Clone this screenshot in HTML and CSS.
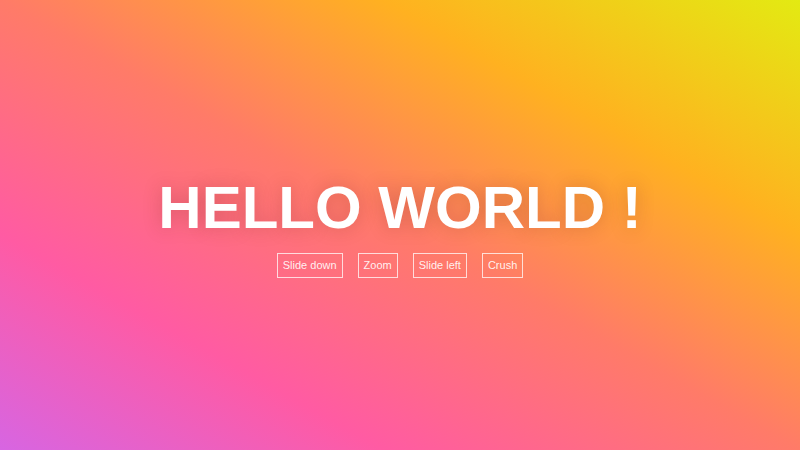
FILE: index.html
```html
<!DOCTYPE html>
<html>
<head>
<meta charset="utf-8">
<link rel="stylesheet" href="styles.css">
</head>
<body>
<main class="stage">
  <h1 class="title">HELLO WORLD !</h1>
  <div class="actions">
    <button class="btn">Slide down</button>
    <button class="btn">Zoom</button>
    <button class="btn">Slide left</button>
    <button class="btn">Crush</button>
  </div>
</main>
</body>
</html>
```
FILE: styles.css
```css
html, body {
  margin: 0;
  padding: 0;
  width: 800px;
  height: 450px;
  overflow: hidden;
}
body {
  font-family: "Liberation Sans", Arial, sans-serif;
  background: linear-gradient(to right top, #d765e2 0%, #ff5ba3 24%, #ff7b68 50%, #ffb120 74%, #e3ea12 100%);
}
.stage {
  height: 450px;
  display: flex;
  flex-direction: column;
  align-items: center;
  justify-content: center;
  gap: 11px;
}
.title {
  margin: 0;
  font-size: 60px;
  font-weight: bold;
  line-height: 69px;
  color: #ffffff;
  text-shadow: 0 0 18px rgba(120, 40, 30, 0.28);
}
.actions {
  display: flex;
  gap: 15px;
}
.btn {
  height: 25px;
  padding: 0 5px;
  background: transparent;
  border: 1px solid rgba(255, 255, 255, 0.75);
  color: rgba(255, 255, 255, 0.9);
  font-family: "Liberation Sans", Arial, sans-serif;
  font-size: 11px;
  line-height: 23px;
  cursor: pointer;
}
```
